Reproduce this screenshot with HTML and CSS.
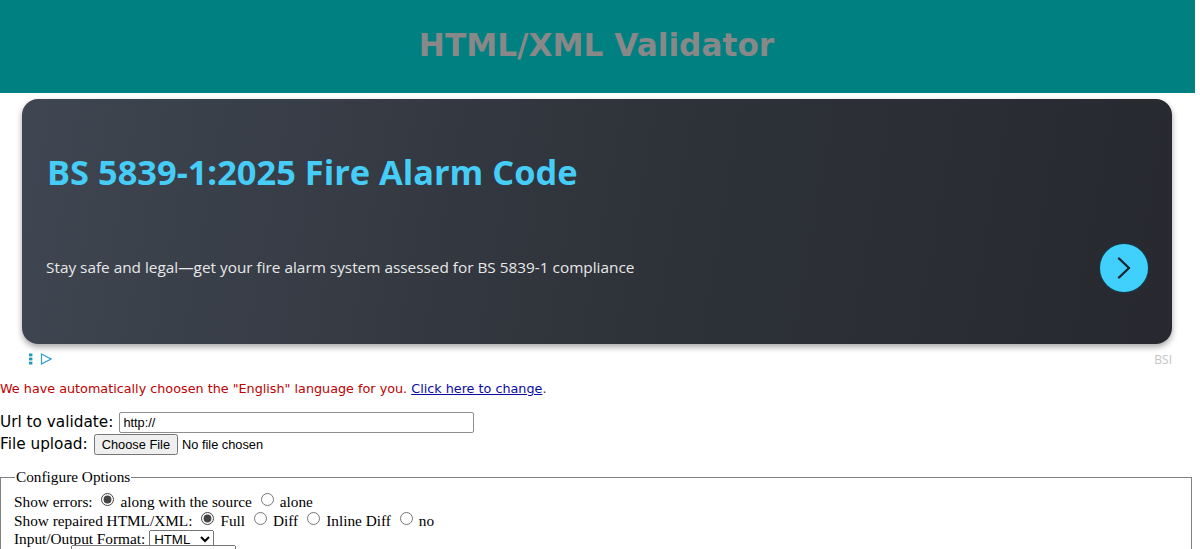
FILE: index.html
```html
<!DOCTYPE html>
<html lang="en">
<head>
    <meta charset="UTF-8">
    <title>HTML/XML Validator</title>
    <link rel="stylesheet" href="styles.css">
</head>
<body>
    <div class="page">
        <header class="site-header">
            <h1>HTML/XML Validator</h1>
        </header>

        <div class="ad-wrap">
            <div class="ad-card">
                <h2 class="ad-title">BS 5839-1:2025 Fire Alarm Code</h2>
                <div class="ad-bottom">
                    <p class="ad-text">Stay safe and legal—get your fire alarm system assessed for BS 5839-1 compliance</p>
                    <span class="ad-go">
                        <svg width="20" height="22" viewBox="0 0 20 22" fill="none" stroke="#1c2430" stroke-width="2.4" stroke-linecap="round" stroke-linejoin="round">
                            <path d="M5 1.5 L15 11 L5 20.5"></path>
                        </svg>
                    </span>
                </div>
            </div>
            <div class="ad-foot">
                <div class="ad-icons">
                    <svg width="6" height="12" viewBox="0 0 6 12" fill="#1a9bbd">
                        <rect x="1" y="0.5" width="3.4" height="2.8"></rect>
                        <rect x="1" y="4.6" width="3.4" height="2.8"></rect>
                        <rect x="1" y="8.7" width="3.4" height="2.8"></rect>
                    </svg>
                    <svg width="12" height="12" viewBox="0 0 12 12" fill="none" stroke="#2a9fd0" stroke-width="1.2">
                        <path d="M1.5 1 L11 6 L1.5 11 Z"></path>
                    </svg>
                </div>
                <span class="ad-brand">BSI</span>
            </div>
        </div>

        <p class="lang-note">We have automatically choosen the "English" language for you. <a href="#">Click here to change</a><span class="dot">.</span></p>

        <form class="validator">
            <div class="source-row">
                <label for="url">Url to validate:</label>
                <input type="text" id="url" class="url-input" value="http://">
            </div>
            <div class="source-row">
                <label for="file">File upload:</label>
                <input type="file" id="file" class="file-input">
            </div>

            <fieldset class="options">
                <legend>Configure Options</legend>
                <div class="opt-row opt-row-tall">
                    Show errors:
                    <input type="radio" name="errors" checked> along with the source
                    <input type="radio" name="errors"> alone
                </div>
                <div class="opt-row">
                    Show repaired HTML/XML:
                    <input type="radio" name="repaired" checked> Full
                    <input type="radio" name="repaired"> Diff
                    <input type="radio" name="repaired"> Inline Diff
                    <input type="radio" name="repaired"> no
                </div>
                <div class="opt-row opt-row-short">
                    Input/Output Format:
                    <select class="format-select">
                        <option>HTML</option>
                        <option>XML</option>
                    </select>
                </div>
                <div class="opt-row">
                    <select class="charset-select">
                        <option>Autodetect</option>
                    </select>
                </div>
            </fieldset>
        </form>
    </div>
</body>
</html>
```

FILE: styles.css
```css
html, body {
    height: 549px;
    overflow: hidden;
}

body {
    margin: 0;
    background-color: #ffffff;
    color: #000000;
    font-family: "Liberation Serif", serif;
}

.page {
    width: 1195px;
}

.site-header {
    height: 93px;
    padding: 0 2px 4px 0;
    box-sizing: border-box;
    background-color: #008080;
    display: flex;
    align-items: center;
    justify-content: center;
}

.site-header h1 {
    margin: 0;
    color: #888888;
    font-family: "DejaVu Sans", sans-serif;
    font-size: 31.2px;
    font-weight: bold;
}

.ad-wrap {
    padding: 6px 23px 0 22px;
}

.ad-card {
    height: 245px;
    box-sizing: border-box;
    padding: 51px 24px 0 25px;
    border-radius: 16px;
    background: linear-gradient(100deg, #3f4651 0%, #2e3239 55%, #27292f 100%);
    box-shadow: 0 3px 6px rgba(0, 0, 0, 0.35);
}

.ad-title {
    margin: 0;
    color: #45cdf7;
    font-family: "Open Sans", sans-serif;
    font-size: 34.4px;
    font-weight: 700;
    line-height: 44px;
}

.ad-bottom {
    display: flex;
    align-items: center;
    justify-content: space-between;
    margin-top: 50px;
}

.ad-text {
    margin: 0 0 2px -1px;
    color: #e8e8e8;
    font-family: "Open Sans", sans-serif;
    font-size: 15.35px;
}

.ad-go {
    width: 48px;
    height: 48px;
    border-radius: 50%;
    background-color: #41d0fc;
    box-shadow: 0 0 0 1px #123c4c;
    display: flex;
    align-items: center;
    justify-content: center;
}

.ad-foot {
    display: flex;
    justify-content: space-between;
    align-items: center;
    height: 18px;
    margin-top: 6px;
}

.ad-icons {
    display: flex;
    align-items: center;
    gap: 6px;
    padding-left: 6px;
}

.ad-brand {
    color: #c4c4c4;
    font-family: "Open Sans", sans-serif;
    font-size: 12px;
}

.lang-note {
    margin: 12px 0 0;
    color: #c00000;
    font-family: "DejaVu Sans", sans-serif;
    font-size: 12.77px;
    line-height: 17px;
}

.lang-note a {
    color: #0a0aa8;
}

.lang-note .dot {
    color: #333333;
}

.validator {
    margin-top: 14px;
}

.source-row {
    display: flex;
    align-items: center;
    gap: 6px;
    height: 22px;
    font-family: "DejaVu Sans", sans-serif;
    font-size: 15.3px;
}

.url-input {
    width: 355px;
    height: 21px;
    box-sizing: border-box;
    padding: 1px 3px;
    border: 1px solid #8f8f8f;
    border-radius: 2px;
    font-family: "Liberation Sans", sans-serif;
    font-size: 12.8px;
}

.file-input {
    font-family: "Liberation Sans", sans-serif;
    font-size: 12.8px;
}

.options {
    margin: 13px 3px 0 0;
    padding: 7px 12px 10px 13px;
    border: 1px solid #808080;
    font-size: 15.3px;
    line-height: 18px;
}

.options legend {
    padding: 0 1px;
    margin-left: 1px;
}

.opt-row {
    height: 18px;
    white-space: nowrap;
}

.opt-row-tall {
    height: 19px;
}

.opt-row-short {
    height: 15px;
}

.opt-row input[type="radio"] {
    margin: 0 2.3px 0 5px;
    vertical-align: 1px;
    accent-color: #444444;
}

.format-select {
    font-family: "Liberation Sans", sans-serif;
    font-size: 13.3px;
    width: 65px;
    height: 18px;
}

.charset-select {
    font-family: "Liberation Sans", sans-serif;
    font-size: 13.3px;
    width: 165px;
    height: 18px;
    margin-left: 57px;
}
```
